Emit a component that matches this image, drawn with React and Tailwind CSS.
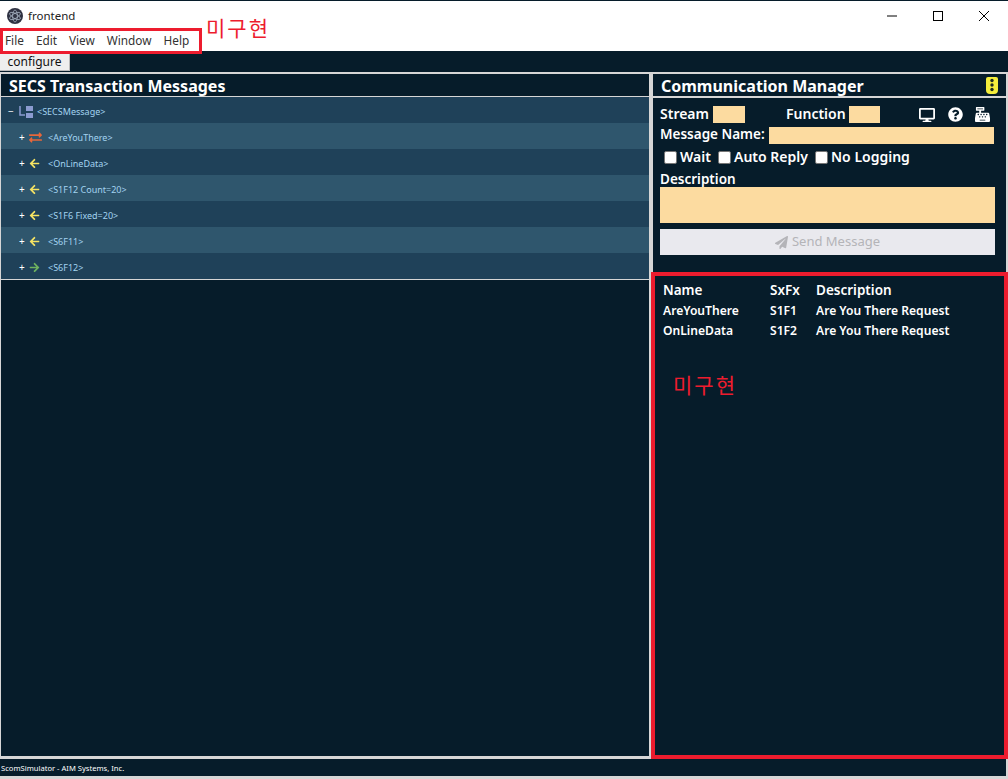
import { FaArrowLeft, FaArrowRight, FaCashRegister, FaDesktop, FaExchangeAlt, FaPaperPlane, FaQuestionCircle } from "react-icons/fa";

const TREE_ROWS = [
  { label: "<AreYouThere>", kind: "both" },
  { label: "<OnLineData>", kind: "in" },
  { label: "<S1F12 Count=20>", kind: "in" },
  { label: "<S1F6 Fixed=20>", kind: "in" },
  { label: "<S6F11>", kind: "in" },
  { label: "<S6F12>", kind: "out" },
];

const MESSAGES = [
  { name: "AreYouThere", sxfx: "S1F1", description: "Are You There Request" },
  { name: "OnLineData", sxfx: "S1F2", description: "Are You There Request" },
];

const MENU = ["File", "Edit", "View", "Window", "Help"];

function RowIcon({ kind }) {
  if (kind === "both") return <FaExchangeAlt className="h-[13px] w-[13px] text-[#e8673a]" />;
  if (kind === "out") return <FaArrowRight className="h-[11px] w-[11px] text-[#6fb35f]" />;
  return <FaArrowLeft className="h-[11px] w-[11px] text-[#f7e463]" />;
}

function Check({ label, className }) {
  return (
    <label className={"flex items-center " + className}>
      <span className="mr-[3px] h-[13px] w-[13px] rounded-[2px] border border-[#767676] bg-white" />
      <span className="pb-[2px]">{label}</span>
    </label>
  );
}

export default function App() {
  return (
    <div className="relative flex h-[779px] w-[1008px] flex-col overflow-hidden bg-[#d6d6d6] font-['Noto_Sans',sans-serif] text-white">
      {/* window chrome */}
      <div className="h-px bg-[#061c2a]" />
      <div className="flex h-[30px] items-center bg-white pl-[7px] text-[#222]">
        <svg width="16" height="16" viewBox="0 0 16 16" className="mr-[5px]">
          <circle cx="8" cy="8" r="8" fill="#2f3242" />
          <g fill="none" stroke="#a4b0c0" strokeWidth="0.8">
            <ellipse cx="8" cy="8" rx="6" ry="2.4" transform="rotate(30 8 8)" />
            <ellipse cx="8" cy="8" rx="6" ry="2.4" transform="rotate(90 8 8)" />
            <ellipse cx="8" cy="8" rx="6" ry="2.4" transform="rotate(150 8 8)" />
          </g>
        </svg>
        <span className="text-[11.5px]">frontend</span>
        <div className="ml-auto flex items-center pr-px text-black">
          <svg width="46" height="30" viewBox="0 0 46 30"><path d="M18 15h10" stroke="#000" strokeWidth="1" /></svg>
          <svg width="46" height="30" viewBox="0 0 46 30"><rect x="18.500" y="10.500" width="9" height="9" fill="none" stroke="#000" /></svg>
          <svg width="46" height="30" viewBox="0 0 46 30"><path d="M18 10l10 10M28 10l-10 10" stroke="#000" strokeWidth="1" /></svg>
        </div>
      </div>
      <div className="flex h-[20px] items-center gap-[12px] bg-white pl-[5px] text-[11.8px] text-[#333]">
        {MENU.map((item) => (
          <span key={item}>{item}</span>
        ))}
      </div>

      {/* app */}
      <div className="flex h-[21px] bg-[#061c2a]">
        <button className="h-[20px] w-[70px] border-r border-b border-[#bbb] bg-[#eeeeee] pt-px text-[12px] leading-[20px] text-[#111]">
          configure
        </button>
      </div>

      <div className="flex h-[684px] gap-[4px] pt-[2px] pl-px">
        <section className="flex w-[648px] flex-col bg-[#061c2a]">
          <h1 className="h-[22px] pl-[8px] text-[16px] leading-[24px] font-bold">SECS Transaction Messages</h1>
          <div className="border-t border-[#d6d6d6]">
            <div className="flex h-[26px] items-center bg-[#1f4159] pt-[3px] pl-[7px] text-[9px] text-[#a3d3f0]">
              <span className="w-[11px] text-[10px] text-white">−</span>
              <svg width="14" height="12" viewBox="0 0 14 12" className="mr-[4px]">
                <path d="M1 0v9h5" fill="none" stroke="#8b9bd0" strokeWidth="1.500" />
                <rect x="7" y="0" width="7" height="5" fill="#8b9bd0" />
                <rect x="7" y="7" width="7" height="5" fill="#8b9bd0" />
              </svg>
              <span>{"<SECSMessage>"}</span>
            </div>
            {TREE_ROWS.map((row, i) => (
              <div
                key={row.label}
                className={"flex h-[26px] items-center pt-[3px] pl-[18px] text-[9px] text-[#a3d3f0] " + (i % 2 === 0 ? "bg-[#2f566d]" : "bg-[#1f4159]")}
              >
                <span className="w-[10px] text-[10px] text-white">+</span>
                <span className="flex w-[19px] justify-start">
                  <RowIcon kind={row.kind} />
                </span>
                <span>{row.label}</span>
              </div>
            ))}
          </div>
          <div className="border-t border-[#d6d6d6]" />
        </section>

        <section className="flex w-[353px] flex-col bg-[#061c2a]">
          <div className="flex h-[22px] items-center justify-between pr-[8px] pl-[8px]">
            <h2 className="pt-[2px] text-[16px] font-bold">Communication Manager</h2>
            <svg width="12" height="17" viewBox="0 0 12 17">
              <path d="M2 0h8a2 2 0 0 1 2 2v11a4 4 0 0 1-4 4H4a4 4 0 0 1-4-4V2a2 2 0 0 1 2-2z" fill="#f5ee3c" />
              <circle cx="6" cy="3.500" r="1.700" fill="#1d2a20" />
              <circle cx="6" cy="8" r="1.700" fill="#1d2a20" />
              <circle cx="6" cy="12.500" r="1.700" fill="#1d2a20" />
            </svg>
          </div>
          <div className="border-t-2 border-[#d6d6d6] pt-[8px] pr-[10px] pl-[7px] text-[13.500px] font-semibold">
            <div className="flex h-[17px] items-center">
              <span className="w-[53px] pb-[2px] text-[14px]">Stream</span>
              <span className="h-[17px] w-[32px] bg-[#fcdba0]" />
              <span className="ml-[41px] w-[63px] pb-[2px] text-[14px]">Function</span>
              <span className="h-[17px] w-[31px] bg-[#fcdba0]" />
              <FaDesktop className="ml-[39px] h-[16px] w-[16px]" />
              <FaQuestionCircle className="ml-[13px] h-[15px] w-[15px]" />
              <FaCashRegister className="ml-[12px] h-[15px] w-[15px]" />
            </div>
            <div className="mt-[4px] flex h-[17px] items-center">
              <span className="w-[109px] pb-[2px]">Message Name:</span>
              <span className="h-[17px] w-[225px] bg-[#fcdba0]" />
            </div>
            <div className="mt-[4px] flex h-[18px] items-center pl-[4px] text-[14px]">
              <Check label="Wait" className="w-[54px]" />
              <Check label="Auto Reply" className="w-[97px]" />
              <Check label="No Logging" className="" />
            </div>
            <div className="mt-[4px] h-[17px] leading-[19px]">Description</div>
            <div className="h-[36px] w-[335px] bg-[#fcdba0]" />
            <button className="mt-[6px] flex h-[26px] w-[335px] items-center justify-center gap-[4px] bg-[#e9e9ee] text-[13px] font-normal text-[#b4b4b8]">
              <FaPaperPlane className="h-[13px] w-[13px]" />
              Send Message
            </button>
          </div>

          <div className="mt-[17px] flex-1 pt-[8px] pl-[10px] text-[12.100px] font-semibold">
            <div className="grid h-[21px] grid-cols-[107px_46px_1fr] text-[13.500px] leading-[20px]">
              <span>Name</span>
              <span>SxFx</span>
              <span>Description</span>
            </div>
            {MESSAGES.map((msg) => (
              <div key={msg.name} className="grid grid-cols-[107px_46px_1fr] items-center leading-[20px]">
                <span>{msg.name}</span>
                <span>{msg.sxfx}</span>
                <span>{msg.description}</span>
              </div>
            ))}
          </div>
        </section>
      </div>

      <div className="mt-[3px] mr-[2px] h-[17px] bg-[#061c2a] pl-px text-[7.600px] leading-[19px]">ScomSimulator - AIM Systems, Inc.</div>

      {/* red annotations pasted over the screenshot */}
      <div className="absolute top-[28px] left-0 h-[26px] w-[202px] border-[3px] border-[#ed1c2e]" />
      <span className="absolute top-[12px] left-[206px] font-['Noto_Sans_CJK_KR',sans-serif] text-[21px] leading-[30px] tracking-[2px] text-[#ed1c2e]">미구현</span>
      <div className="absolute top-[272px] left-[651px] h-[487px] w-[357px] border-[4px] border-[#ed1c2e]" />
      <span className="absolute top-[369px] left-[673px] font-['Noto_Sans_CJK_KR',sans-serif] text-[21px] leading-[30px] tracking-[2px] text-[#ed1c2e]">미구현</span>
    </div>
  );
}
